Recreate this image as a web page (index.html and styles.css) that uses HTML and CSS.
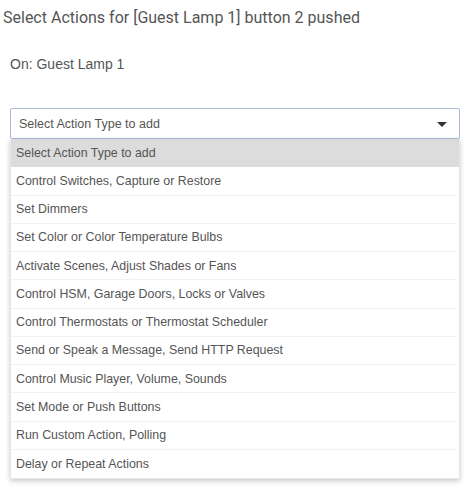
FILE: index.html
```html
<!DOCTYPE html>
<html>
<head>
<meta charset="utf-8">
<link rel="stylesheet" href="styles.css">
</head>
<body>
<div class="page">
  <h1 class="title">Select Actions for [Guest Lamp 1] button 2 pushed</h1>
  <div class="on">On: Guest Lamp 1</div>
  <div class="select-wrap">
    <div class="select">
      <span class="select-text">Select Action Type to add</span>
      <span class="caret"></span>
    </div>
    <ul class="menu">
      <li class="item active">Select Action Type to add</li>
      <li class="item">Control Switches, Capture or Restore</li>
      <li class="item">Set Dimmers</li>
      <li class="item">Set Color or Color Temperature Bulbs</li>
      <li class="item">Activate Scenes, Adjust Shades or Fans</li>
      <li class="item">Control HSM, Garage Doors, Locks or Valves</li>
      <li class="item">Control Thermostats or Thermostat Scheduler</li>
      <li class="item">Send or Speak a Message, Send HTTP Request</li>
      <li class="item">Control Music Player, Volume, Sounds</li>
      <li class="item">Set Mode or Push Buttons</li>
      <li class="item">Run Custom Action, Polling</li>
      <li class="item last">Delay or Repeat Actions</li>
    </ul>
  </div>
</div>
</body>
</html>
```
FILE: styles.css
```css
html, body {
  margin: 0;
  padding: 0;
  background: #fff;
}
.page {
  width: 474px;
  height: 493px;
  overflow: hidden;
}
.title {
  margin: 0;
  padding: 8px 0 0 3px;
  font-family: Roboto, "Liberation Sans", sans-serif;
  font-weight: 400;
  font-size: 16px;
  line-height: 20px;
  color: #555;
}
.on {
  margin-top: 26px;
  padding-left: 10px;
  font-family: "Liberation Sans", Arial, sans-serif;
  font-size: 14px;
  line-height: 20px;
  color: #555;
}
.select-wrap {
  margin: 34px 0 0 10px;
  width: 450px;
}
.select {
  box-sizing: border-box;
  height: 31px;
  border: 1px solid #a9b9d9;
  border-radius: 2px;
  display: flex;
  align-items: center;
  justify-content: space-between;
  padding: 0 12px 0 8px;
  font-family: "Liberation Sans", Arial, sans-serif;
  font-size: 12.5px;
  color: #555;
}
.caret {
  width: 0;
  height: 0;
  border-left: 5px solid transparent;
  border-right: 5px solid transparent;
  border-top: 5px solid #333;
  margin-top: 1px;
}
.menu {
  list-style: none;
  margin: 0;
  padding: 0;
  background: #fff;
  box-shadow: 0 2px 5px rgba(0,0,0,0.22);
  border: 1px solid #e6e6e6;
  border-top: none;
  box-sizing: border-box;
}
.item {
  height: 28.25px;
  box-sizing: border-box;
  display: flex;
  align-items: center;
  padding-left: 5px;
  margin-right: 3px;
  font-family: "Liberation Sans", Arial, sans-serif;
  font-size: 12.4px;
  color: #555;
  border-bottom: 1px solid #f2f2f2;
}
.item.active {
  background: #dcdcdc;
  margin-right: 0;
  border-bottom-color: #dcdcdc;
}
.item.last {
  border-bottom: none;
}
```
